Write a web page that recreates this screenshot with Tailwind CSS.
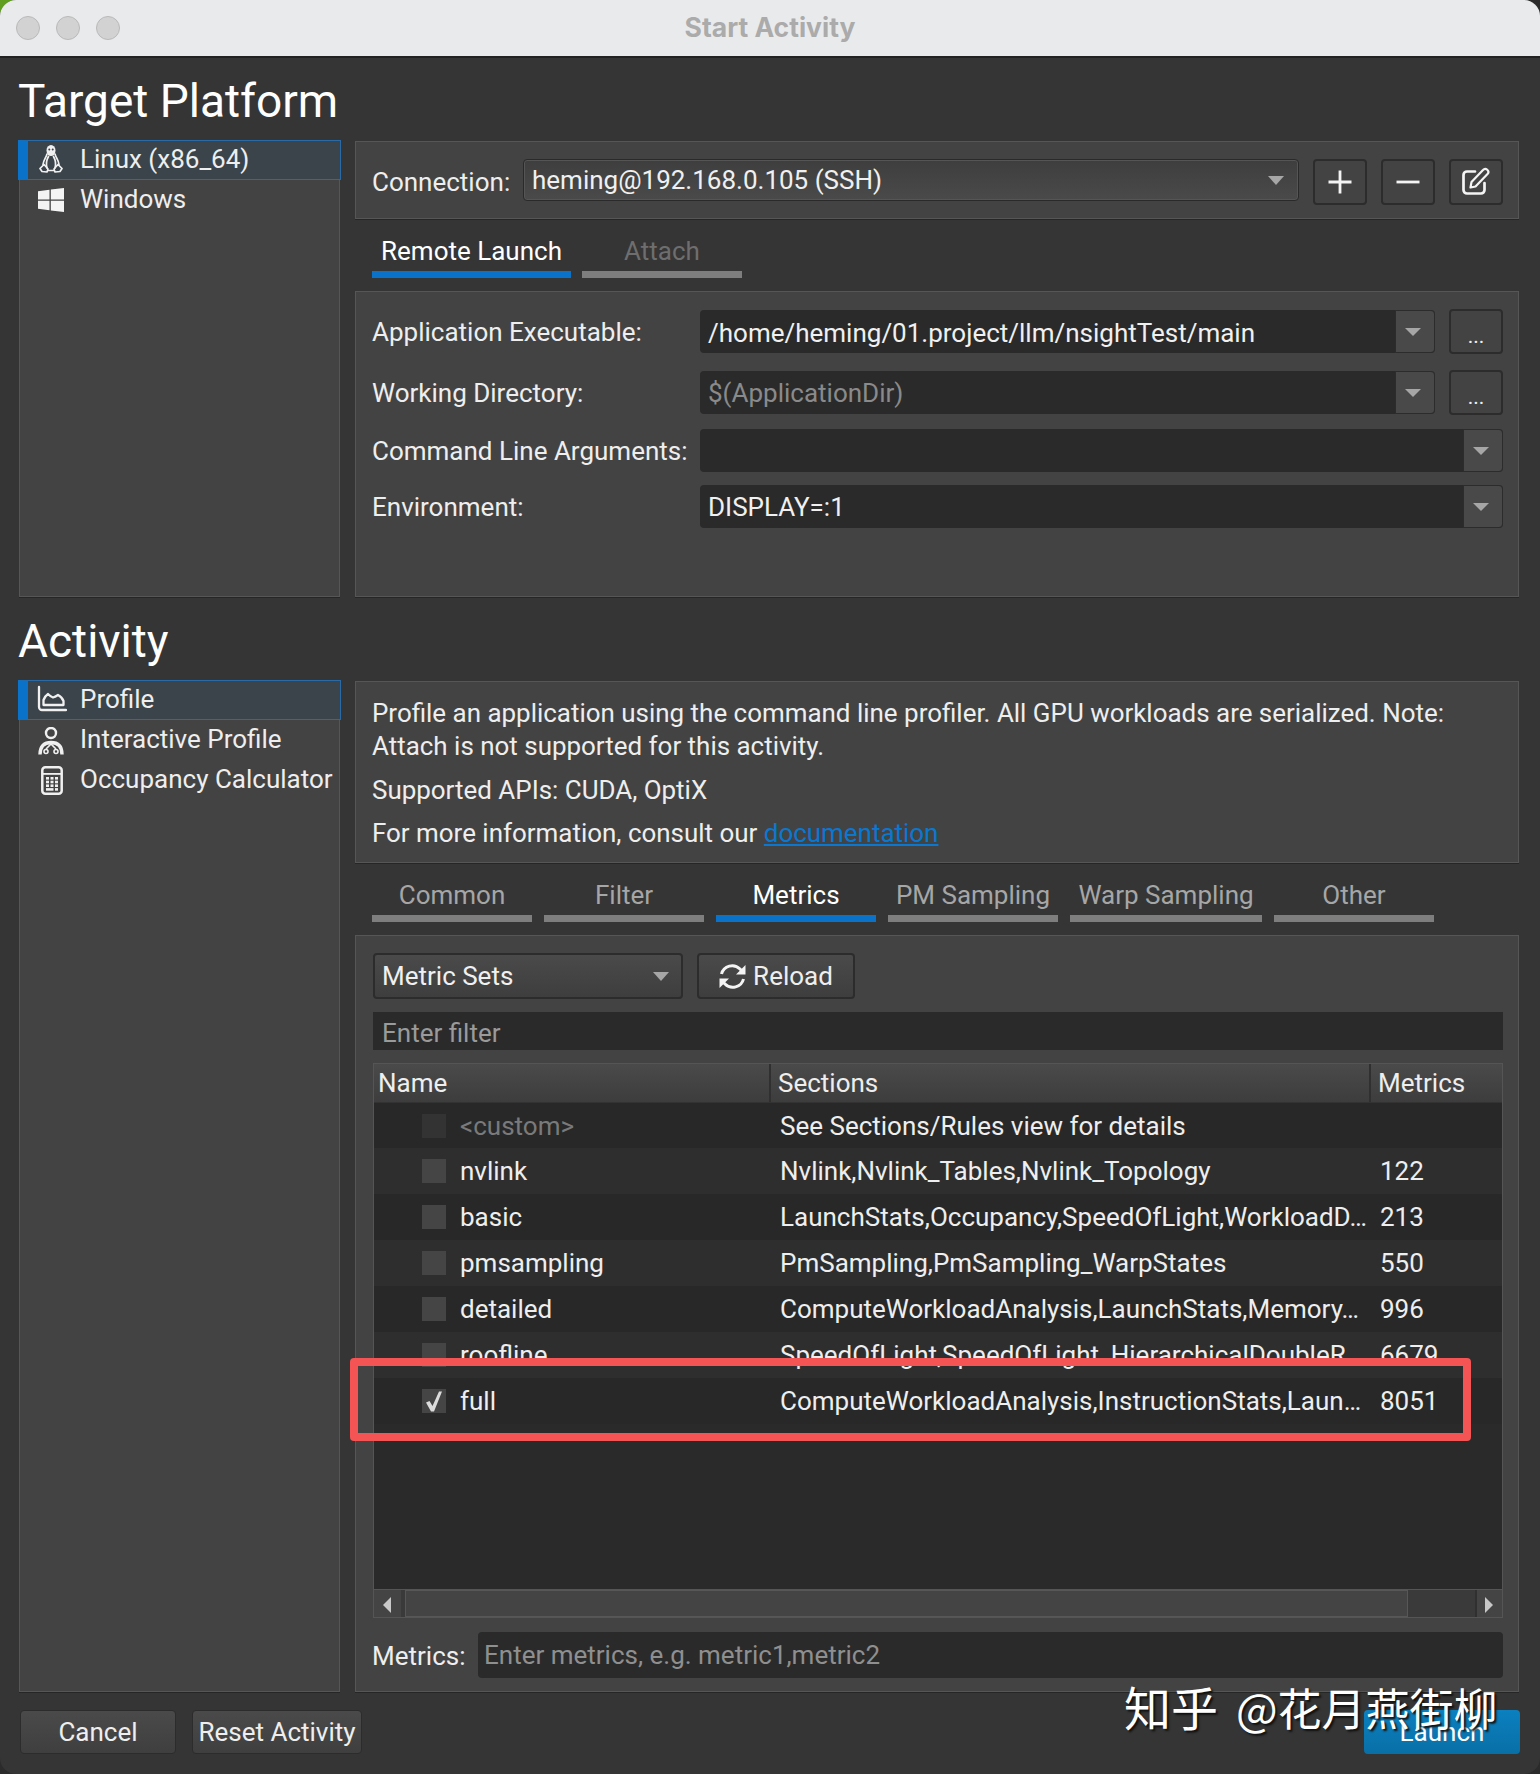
<!DOCTYPE html>
<html lang="en">
<head>
<meta charset="utf-8">
<title>Start Activity</title>
<script src="https://cdn.jsdelivr.net/npm/@tailwindcss/browser@4"></script>
</head>
<body class="m-0 bg-[#2b2b2b]">
<div class="relative w-[1540px] h-[1774px] overflow-hidden font-['Roboto',sans-serif] text-[26px] leading-[30px] text-[#eeeeee]">
  <div class="absolute left-0 top-0 w-6 h-6 bg-[#5f9e1e]"></div>
  <div class="relative h-full rounded-[16px] overflow-hidden bg-[#353535] flex flex-col">
    <!-- Title bar -->
    <div class="relative shrink-0 h-[58px] bg-[#e9eaeb] border-b-2 border-[#222222] flex items-center justify-center pb-[2px]">
      <div class="absolute left-[16px] top-[16px] flex gap-[16px]">
        <span class="block w-6 h-6 rounded-full bg-[#d2d2d2] border border-[#b9b9b9]"></span>
        <span class="block w-6 h-6 rounded-full bg-[#d2d2d2] border border-[#b9b9b9]"></span>
        <span class="block w-6 h-6 rounded-full bg-[#d2d2d2] border border-[#b9b9b9]"></span>
      </div>
      <span class="font-['Inter',sans-serif] font-bold text-[26.5px] text-[#ababab]">Start Activity</span>
    </div>

    <div class="flex-1 flex flex-col pl-[18px] pr-[21px]">
      <!-- Target Platform -->
      <h1 class="h-[82px] pt-[16px] text-[46px] leading-[54px] font-normal text-white">Target Platform</h1>
      <div class="flex gap-[15px] h-[457px]">
        <div class="ml-px w-[321px] bg-[#434343] border-x border-b border-[#565656] shadow-[0_1px_0_#262626]">
          <div class="relative -mx-[2px] h-10 pb-[2px] flex items-center bg-[#3b444b] border border-[#2a6aa6] border-l-[10px] border-l-[#0a72c9]">
            <svg class="absolute left-[11px] top-[4px] w-[24px] h-[28px]" viewBox="0 0 24 28" fill="none" stroke="#f0f0f0" stroke-width="1.700" stroke-linejoin="round" stroke-linecap="round">
              <ellipse cx="12" cy="5.500" rx="4.500" ry="5.500" fill="#f0f0f0" stroke="none"/>
              <circle cx="10.300" cy="4.500" r="1" fill="#3b444b" stroke="none"/>
              <circle cx="13.700" cy="4.500" r="1" fill="#3b444b" stroke="none"/>
              <path d="M8 9C7 13 4.500 15 4 19.500M16 9c1 4 3.500 6 4 10.500"/>
              <path d="M9.500 11.500C7.500 15 7 19.500 8 23M14.500 11.500c2 3.500 2.500 8 1.500 11.500M9.500 25.500h5"/>
              <path d="M1 23.500l4-4 4 4.500-1 3-5-.5zM23 23.500l-4-4-4 4.500 1 3 5-.5z"/>
            </svg>
            <span class="absolute left-[52px]">Linux (x86_64)</span>
          </div>
          <div class="relative h-10 pb-[2px] flex items-center">
            <svg class="absolute left-[18px] top-[8px] w-[26px] h-[24px]" viewBox="0 0 26 24" fill="#f4f4f4"><path d="M0 3.200L11.500 1.700V11.500H0zM12.800 1.500L26 0V11.500H12.800zM0 12.800H11.500V22.300L0 20.800zM12.800 12.800H26V24L12.800 22.500z"/></svg>
            <span class="absolute left-[60px]">Windows</span>
          </div>
        </div>
        <div class="flex-1 flex flex-col pt-px">
          <div class="h-[78px] shrink-0 bg-[#434343] border border-[#565656] shadow-[0_1px_0_#262626] flex items-start pt-[17px] pl-[16px] pr-[15px]">
            <span class="w-[151px] shrink-0 mt-[8px]">Connection:</span>
            <div class="relative w-[776px] h-[42px] rounded-[4px] bg-linear-to-b from-[#3e3e3e] to-[#4a4a4a] border border-[#2a2a2a] shadow-[inset_0_0_0_1px_#555555] pl-[8px] leading-[40px] text-[#f0f0f0]">
              heming@192.168.0.105 (SSH)
              <span class="absolute right-[14px] top-[16px] w-0 h-0 border-x-[8px] border-x-transparent border-t-[9px] border-t-[#a6a6a6]"></span>
            </div>
            <div class="ml-[14px] flex gap-[14px]">
              <div class="w-[54px] h-[46px] rounded-[4px] bg-[#434343] border-2 border-[#2c2c2c] flex items-center justify-center">
                <svg class="w-[24px] h-[24px]" viewBox="0 0 24 24" stroke="#f4f4f4" stroke-width="2.800" fill="none"><path d="M12 .5v23M.5 12h23"/></svg>
              </div>
              <div class="w-[54px] h-[46px] rounded-[4px] bg-[#434343] border-2 border-[#2c2c2c] flex items-center justify-center">
                <svg class="w-[24px] h-[24px]" viewBox="0 0 24 24" stroke="#f4f4f4" stroke-width="2.800" fill="none"><path d="M.5 12h23"/></svg>
              </div>
              <div class="w-[54px] h-[46px] rounded-[4px] bg-[#434343] border-2 border-[#2c2c2c] flex items-center justify-center">
                <svg class="w-[30px] h-[30px]" viewBox="0 0 30 30" stroke="#f4f4f4" stroke-width="2.700" fill="none" stroke-linejoin="round" stroke-linecap="round"><path d="M14 4.500H6a3.500 3.500 0 0 0-3.500 3.500v15a3.500 3.500 0 0 0 3.500 3.500h14a3.500 3.500 0 0 0 3.500-3.500v-7"/><path d="M9.500 20.500l1-5.500L22 3a2.800 2.800 0 0 1 4.500 4L14.500 19.500z" stroke-width="2.200"/></svg>
              </div>
            </div>
          </div>
          <div class="h-[72px] shrink-0 flex gap-[11px] pl-[17px] pb-[13px] items-end">
            <div class="w-[199px] flex flex-col items-center text-white"><span class="mb-[5px]">Remote Launch</span><span class="block w-full h-[7px] bg-[#0a72c9]"></span></div>
            <div class="w-[160px] flex flex-col items-center text-[#6e6e6e]"><span class="mb-[5px]">Attach</span><span class="block w-full h-[7px] bg-[#7e7e7e]"></span></div>
          </div>
          <div class="flex-1 bg-[#434343] border border-[#565656] shadow-[0_1px_0_#262626] pt-[17px] pl-[16px] pr-[15px] flex flex-col">
            <div class="flex items-center h-[45px]">
              <span class="w-[328px] shrink-0">Application Executable:</span>
              <div class="relative w-[735px] h-[43px] rounded-[4px] bg-[#2a2a2a] pl-[8px] leading-[46px] text-[#f0f0f0]">/home/heming/01.project/llm/nsightTest/main
                <span class="absolute right-0 top-0 w-[40px] h-full pr-[5px] rounded-r-[4px] bg-[#494949] border border-[#2c2c2c] flex items-center justify-center"><span class="w-0 h-0 border-x-[8px] border-x-transparent border-t-[8px] border-t-[#a6a6a6]"></span></span>
              </div>
              <div class="ml-[14px] w-[54px] h-[45px] rounded-[4px] bg-[#434343] border-2 border-[#2c2c2c] flex items-end justify-center pb-[6px] text-[21px] leading-[20px]">...</div>
            </div>
            <div class="flex items-center h-[45px] mt-[16px]">
              <span class="w-[328px] shrink-0">Working Directory:</span>
              <div class="relative w-[735px] h-[43px] rounded-[4px] bg-[#2a2a2a] pl-[8px] leading-[45px] text-[#8a8a8a]">$(ApplicationDir)
                <span class="absolute right-0 top-0 w-[40px] h-full pr-[5px] rounded-r-[4px] bg-[#494949] border border-[#2c2c2c] flex items-center justify-center"><span class="w-0 h-0 border-x-[8px] border-x-transparent border-t-[8px] border-t-[#a6a6a6]"></span></span>
              </div>
              <div class="ml-[14px] w-[54px] h-[45px] rounded-[4px] bg-[#434343] border-2 border-[#2c2c2c] flex items-end justify-center pb-[6px] text-[21px] leading-[20px]">...</div>
            </div>
            <div class="flex items-center h-[43px] mt-[14px]">
              <span class="w-[328px] shrink-0">Command Line Arguments:</span>
              <div class="relative w-[803px] h-[43px] rounded-[4px] bg-[#2a2a2a]">
                <span class="absolute right-0 top-0 w-[40px] h-full pr-[5px] rounded-r-[4px] bg-[#494949] border border-[#2c2c2c] flex items-center justify-center"><span class="w-0 h-0 border-x-[8px] border-x-transparent border-t-[8px] border-t-[#a6a6a6]"></span></span>
              </div>
            </div>
            <div class="flex items-center h-[43px] mt-[13px]">
              <span class="w-[328px] shrink-0">Environment:</span>
              <div class="relative w-[803px] h-[43px] rounded-[4px] bg-[#2a2a2a] pl-[8px] leading-[44px] text-[#f0f0f0]">DISPLAY=:1
                <span class="absolute right-0 top-0 w-[40px] h-full pr-[5px] rounded-r-[4px] bg-[#494949] border border-[#2c2c2c] flex items-center justify-center"><span class="w-0 h-0 border-x-[8px] border-x-transparent border-t-[8px] border-t-[#a6a6a6]"></span></span>
              </div>
            </div>
          </div>
        </div>
      </div>

      <!-- Activity -->
      <h1 class="h-[83px] pt-[17px] text-[46px] leading-[54px] font-normal text-white">Activity</h1>
      <div class="flex gap-[15px] h-[1012px]">
        <div class="ml-px w-[321px] bg-[#434343] border-x border-b border-[#565656] shadow-[0_1px_0_#262626]">
          <div class="relative -mx-[2px] h-10 pb-[2px] flex items-center bg-[#3b444b] border border-[#2a6aa6] border-l-[10px] border-l-[#0a72c9]">
            <svg class="absolute left-[9px] top-[4px] w-[30px] h-[30px]" viewBox="0 0 30 30" fill="none" stroke="#f0f0f0" stroke-width="2.300" stroke-linejoin="round" stroke-linecap="round"><path d="M2 2v20a3 3 0 0 0 3 3h24"/><path d="M6.500 20V15Q8 11 11 9Q14 12 16 12.500Q18 12 21 10Q25 12 26.500 16V20Z"/></svg>
            <span class="absolute left-[52px]">Profile</span>
          </div>
          <div class="relative h-10 pb-[2px] flex items-center">
            <svg class="absolute left-[18px] top-[7px] w-[26px] h-[28px]" viewBox="0 0 26 28" fill="none" stroke="#f0f0f0" stroke-width="2.400"><circle cx="13" cy="6" r="5"/><path d="M2 27.500C2 19 6.500 15.500 13 15.500S24 19 24 27.500" stroke-width="3.400"/><path d="M8 22l5-5 5 5" stroke-width="1.600"/><circle cx="8" cy="24.500" r="2" stroke-width="1.600"/><circle cx="18" cy="24.500" r="2" stroke-width="1.600"/></svg>
            <span class="absolute left-[60px]">Interactive Profile</span>
          </div>
          <div class="relative h-10 pb-[2px] flex items-center">
            <svg class="absolute left-[21px] top-[6px] w-[22px] h-[29px]" viewBox="0 0 22 29" fill="#f0f0f0" stroke="none">
              <rect x="1.300" y="1.300" width="19.400" height="26.400" rx="3" fill="none" stroke="#f0f0f0" stroke-width="2.500"/>
              <rect x="2" y="7" width="18" height="1.800"/>
              <rect x="5" y="11" width="3" height="2.600"/><rect x="9.500" y="11" width="3" height="2.600"/><rect x="14" y="11" width="3" height="2.600"/>
              <rect x="5" y="14.700" width="3" height="2.600"/><rect x="9.500" y="14.700" width="3" height="2.600"/><rect x="14" y="14.700" width="3" height="2.600"/>
              <rect x="5" y="18.400" width="3" height="2.600"/><rect x="9.500" y="18.400" width="3" height="2.600"/><rect x="14" y="18.400" width="3" height="2.600"/>
              <rect x="5" y="22.100" width="7.500" height="2.600"/><rect x="14" y="22.100" width="3" height="2.600"/>
            </svg>
            <span class="absolute left-[60px]">Occupancy Calculator</span>
          </div>
        </div>
        <div class="flex-1 flex flex-col pt-px">
          <div class="h-[182px] shrink-0 bg-[#434343] border border-[#565656] shadow-[0_1px_0_#262626] pl-[16px] pr-[15px] pt-[15px] text-[25.95px]">
            <p class="leading-[33px]">Profile an application using the command line profiler. All GPU workloads are serialized. Note:<br>Attach is not supported for this activity.</p>
            <p class="mt-[11px] leading-[33px]">Supported APIs: CUDA, OptiX</p>
            <p class="mt-[10px] leading-[33px]">For more information, consult our <a class="text-[#0a78d0] underline">documentation</a></p>
          </div>
          <div class="h-[72px] shrink-0 flex gap-[12px] pl-[17px] pb-[13px] items-end">
            <div class="w-[160px] flex flex-col items-center text-[#a6a6a6]"><span class="mb-[5px]">Common</span><span class="block w-full h-[7px] bg-[#7e7e7e]"></span></div>
            <div class="w-[160px] flex flex-col items-center text-[#a6a6a6]"><span class="mb-[5px]">Filter</span><span class="block w-full h-[7px] bg-[#7e7e7e]"></span></div>
            <div class="w-[160px] flex flex-col items-center text-white"><span class="mb-[5px]">Metrics</span><span class="block w-full h-[7px] bg-[#0a72c9]"></span></div>
            <div class="w-[170px] flex flex-col items-center text-[#a6a6a6]"><span class="mb-[5px]">PM Sampling</span><span class="block w-full h-[7px] bg-[#7e7e7e]"></span></div>
            <div class="w-[192px] flex flex-col items-center text-[#a6a6a6]"><span class="mb-[5px]">Warp Sampling</span><span class="block w-full h-[7px] bg-[#7e7e7e]"></span></div>
            <div class="w-[160px] flex flex-col items-center text-[#a6a6a6]"><span class="mb-[5px]">Other</span><span class="block w-full h-[7px] bg-[#7e7e7e]"></span></div>
          </div>
          <div class="flex-1 min-h-0 bg-[#434343] border border-[#565656] shadow-[0_1px_0_#262626] pt-[17px] pl-[17px] pr-[15px] flex flex-col">
            <div class="flex gap-[14px] h-[46px]">
              <div class="relative w-[310px] rounded-[4px] bg-linear-to-b from-[#4a4a4a] to-[#3e3e3e] border-2 border-[#2c2c2c] pl-[7px] leading-[42px] text-[#f0f0f0]">Metric Sets
                <span class="absolute right-[12px] top-[17px] w-0 h-0 border-x-[8px] border-x-transparent border-t-[9px] border-t-[#a6a6a6]"></span>
              </div>
              <div class="w-[158px] rounded-[4px] bg-linear-to-b from-[#4a4a4a] to-[#3e3e3e] border-2 border-[#2c2c2c] flex items-center justify-center gap-[7px]">
                <svg class="w-[27px] h-[27px]" viewBox="0 0 27 27" fill="none" stroke="#f4f4f4" stroke-width="3"><path d="M2.500 11A11 11 0 0 1 21 6l1.500 1.500"/><path d="M26.500 2V11.500H17z" fill="#f4f4f4" stroke="none"/><path d="M24.500 16A11 11 0 0 1 6 21l-1.500-1.500"/><path d="M.5 25V15.500H10z" fill="#f4f4f4" stroke="none"/></svg>
                <span>Reload</span>
              </div>
            </div>
            <div class="mt-[13px] h-[38px] bg-[#2a2a2a] pl-[9px] leading-[42px] text-[#9a9a9a]">Enter filter</div>
            <div class="mt-[13px] h-[555px] flex flex-col border border-[#555555] bg-[#2a2a2a]">
              <div class="h-[39px] shrink-0 flex bg-linear-to-b from-[#4a4a4a] to-[#3d3d3d] leading-[38px] border-b border-[#333333]">
                <div class="w-[397px] pl-[4px] border-r-2 border-[#303030]">Name</div>
                <div class="w-[600px] pl-[7px] border-r-2 border-[#303030]">Sections</div>
                <div class="flex-1 pl-[7px]">Metrics</div>
              </div>
              <div class="flex-1 overflow-hidden">
                <div class="h-[45px] flex items-center bg-[#282828]">
                  <div class="w-[397px] shrink-0 flex items-center pl-[48px] gap-[14px] text-[#7a7a7a]"><span class="block w-6 h-6 bg-[#333333]"></span>&lt;custom&gt;</div>
                  <div class="w-[600px] shrink-0 pl-[9px]">See Sections/Rules view for details</div>
                  <div class="pl-[9px]"></div>
                </div>
                <div class="h-[46px] flex items-center bg-[#2e2e2e]">
                  <div class="w-[397px] shrink-0 flex items-center pl-[48px] gap-[14px]"><span class="block w-6 h-6 bg-[#454545]"></span>nvlink</div>
                  <div class="w-[600px] shrink-0 pl-[9px]">Nvlink,Nvlink_Tables,Nvlink_Topology</div>
                  <div class="pl-[9px]">122</div>
                </div>
                <div class="h-[46px] flex items-center bg-[#282828]">
                  <div class="w-[397px] shrink-0 flex items-center pl-[48px] gap-[14px]"><span class="block w-6 h-6 bg-[#454545]"></span>basic</div>
                  <div class="w-[600px] shrink-0 pl-[9px] whitespace-nowrap">LaunchStats,Occupancy,SpeedOfLight,WorkloadD…</div>
                  <div class="pl-[9px]">213</div>
                </div>
                <div class="h-[46px] flex items-center bg-[#2e2e2e]">
                  <div class="w-[397px] shrink-0 flex items-center pl-[48px] gap-[14px]"><span class="block w-6 h-6 bg-[#454545]"></span>pmsampling</div>
                  <div class="w-[600px] shrink-0 pl-[9px]">PmSampling,PmSampling_WarpStates</div>
                  <div class="pl-[9px]">550</div>
                </div>
                <div class="h-[46px] flex items-center bg-[#282828]">
                  <div class="w-[397px] shrink-0 flex items-center pl-[48px] gap-[14px]"><span class="block w-6 h-6 bg-[#454545]"></span>detailed</div>
                  <div class="w-[600px] shrink-0 pl-[9px] whitespace-nowrap">ComputeWorkloadAnalysis,LaunchStats,Memory…</div>
                  <div class="pl-[9px]">996</div>
                </div>
                <div class="h-[46px] flex items-center bg-[#2e2e2e]">
                  <div class="w-[397px] shrink-0 flex items-center pl-[48px] gap-[14px]"><span class="block w-6 h-6 bg-[#454545]"></span>roofline</div>
                  <div class="w-[600px] shrink-0 pl-[9px] whitespace-nowrap">SpeedOfLight,SpeedOfLight_HierarchicalDoubleR…</div>
                  <div class="pl-[9px]">6679</div>
                </div>
                <div class="h-[46px] flex items-center bg-[#282828]">
                  <div class="w-[397px] shrink-0 flex items-center pl-[48px] gap-[14px]"><span class="w-6 h-6 bg-[#454545] flex items-center justify-center"><svg class="w-[18px] h-[21px]" viewBox="0 0 18 21" fill="#dcdcdc"><path d="M1 11.500L4.500 10 7.500 15 14 .5h3L9 20.500H6z"/></svg></span>full</div>
                  <div class="w-[600px] shrink-0 pl-[9px] whitespace-nowrap">ComputeWorkloadAnalysis,InstructionStats,Laun…</div>
                  <div class="pl-[9px]">8051</div>
                </div>
              </div>
              <div class="h-[28px] shrink-0 flex bg-[#3a3a3a] border-t border-[#555555]">
                <div class="w-[27px] bg-[#444444] pt-[2px] pr-[2px] flex items-center justify-center"><span class="w-0 h-0 border-y-[8px] border-y-transparent border-r-[8px] border-r-[#c8c8c8]"></span></div>
                <div class="ml-[4px] w-[1003px] bg-[#444444] border border-[#575757]"></div>
                <div class="flex-1"></div>
                <div class="w-[27px] bg-[#444444] pt-[2px] pr-[2px] border-l-2 border-[#303030] flex items-center justify-center"><span class="w-0 h-0 border-y-[8px] border-y-transparent border-l-[8px] border-l-[#c8c8c8]"></span></div>
              </div>
            </div>
            <div class="mt-[14px] flex items-center h-[46px]">
              <span class="-ml-px w-[106px] shrink-0 pt-[2px]">Metrics:</span>
              <div class="flex-1 h-full rounded-[4px] bg-[#2a2a2a] pl-[6px] leading-[46px] text-[#8f8f8f]">Enter metrics, e.g. metric1,metric2</div>
            </div>
          </div>
        </div>
      </div>

      <!-- Footer -->
      <div class="flex-1 flex items-start pt-[18px] pl-[2px] gap-[16px]">
        <div class="w-[156px] h-[44px] rounded-[4px] bg-linear-to-b from-[#4a4a4a] to-[#3f3f3f] border border-[#2c2c2c] flex items-center justify-center">Cancel</div>
        <div class="w-[170px] h-[44px] rounded-[4px] bg-linear-to-b from-[#4a4a4a] to-[#3f3f3f] border border-[#2c2c2c] flex items-center justify-center">Reset Activity</div>
        <div class="ml-auto -mr-px w-[156px] h-[44px] rounded-[4px] bg-linear-to-b from-[#0b80c0] to-[#096fa6] flex items-center justify-center text-white">Launch</div>
      </div>
    </div>

    <!-- Red annotation -->
    <div class="absolute left-[350px] top-[1358px] w-[1121px] h-[83px] rounded-[4px] border-[8px] border-[#f45454]"></div>
    <!-- Watermark -->
    <div class="absolute left-[1124px] top-[1678px] font-['Noto_Sans_CJK_SC',sans-serif] text-[44px] leading-[56px] text-white whitespace-nowrap [text-shadow:2px_2px_2px_#111111]"><span class="text-[47px] mr-[18px]">知乎</span>@花月燕街柳</div>
  </div>
</div>
</body>
</html>
